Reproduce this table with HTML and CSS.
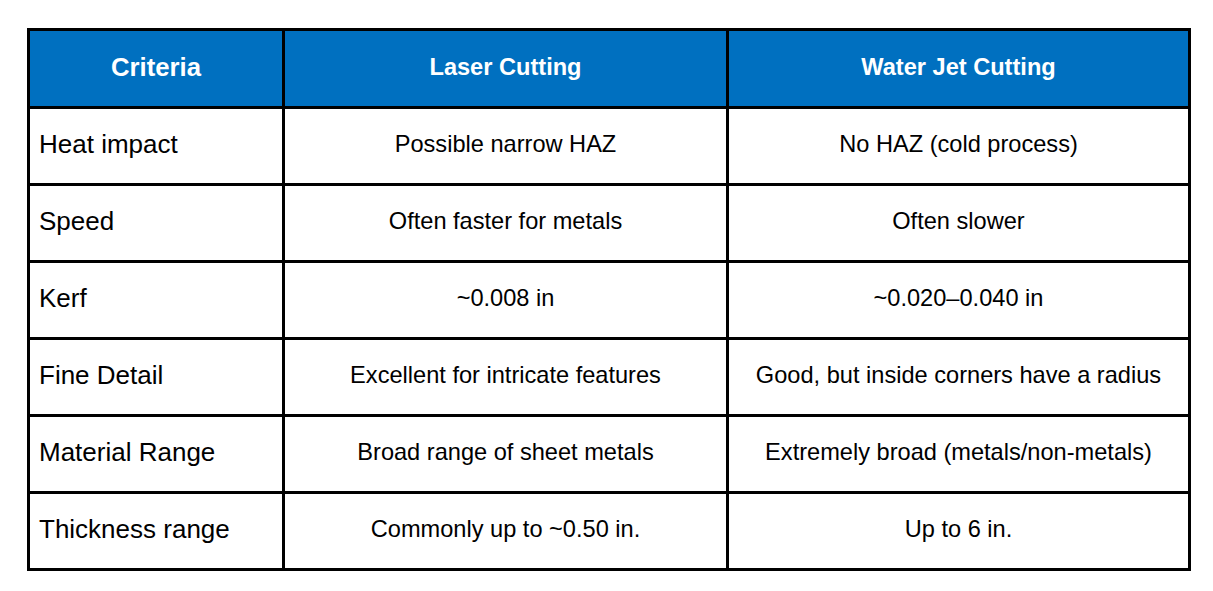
FILE: index.html
```html
<!DOCTYPE html>
<html lang="en">
<head>
<meta charset="utf-8">
<title>Laser vs Water Jet Cutting</title>
<link rel="stylesheet" href="styles.css">
</head>
<body>
<table class="compare">
  <colgroup>
    <col class="c1"><col class="c2"><col class="c3">
  </colgroup>
  <thead>
    <tr>
      <th class="crit">Criteria</th>
      <th>Laser Cutting</th>
      <th>Water Jet Cutting</th>
    </tr>
  </thead>
  <tbody>
    <tr><td class="crit">Heat impact</td><td>Possible narrow HAZ</td><td>No HAZ (cold process)</td></tr>
    <tr><td class="crit">Speed</td><td>Often faster for metals</td><td>Often slower</td></tr>
    <tr><td class="crit">Kerf</td><td>~0.008 in</td><td>~0.020–0.040 in</td></tr>
    <tr><td class="crit">Fine Detail</td><td>Excellent for intricate features</td><td>Good, but inside corners have a radius</td></tr>
    <tr><td class="crit">Material Range</td><td>Broad range of sheet metals</td><td>Extremely broad (metals/non-metals)</td></tr>
    <tr><td class="crit">Thickness range</td><td>Commonly up to ~0.50 in.</td><td>Up to 6 in.</td></tr>
  </tbody>
</table>
</body>
</html>
```
FILE: styles.css
```css
html, body {
  margin: 0;
  padding: 0;
  background: #ffffff;
}

body {
  padding: 28px 0 0 27px;
  font-family: "Liberation Sans", Arial, sans-serif;
  color: #000000;
}

.compare {
  border-collapse: separate;
  border-spacing: 0;
  border-left: 3px solid #000;
  border-top: 3px solid #000;
  table-layout: fixed;
  width: 1164px;
}

.c1 { width: 255px; }
.c2 { width: 444px; }
.c3 { width: 462px; }

.compare th,
.compare td {
  box-sizing: border-box;
  height: 77px;
  padding: 0 9px 4px;
  border-right: 3px solid #000;
  border-bottom: 3px solid #000;
  text-align: center;
  vertical-align: middle;
  font-size: 23.6px;
  white-space: nowrap;
}

.compare th {
  height: 78px;
  padding-bottom: 2px;
  background: #0070c0;
  color: #ffffff;
  font-weight: bold;
}

.compare td.crit {
  text-align: left;
  font-size: 26px;
}

.compare th.crit {
  font-size: 25.7px;
}
```
